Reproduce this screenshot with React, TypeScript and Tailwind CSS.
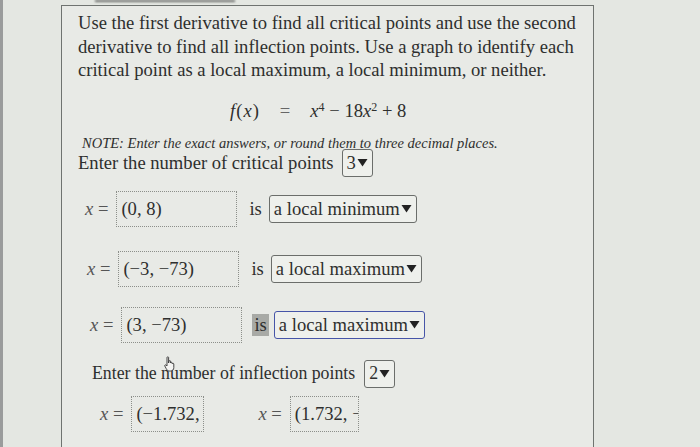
import type { ReactNode } from 'react';

const serif = { fontFamily: '"Liberation Serif", "Times New Roman", serif' };

const Caret = () => (
	<svg width="11" height="9" viewBox="0 0 11 9" className="ml-[1px] shrink-0">
		<path d="M0.5 1 L10.5 1 L5.5 8.5 Z" fill="#222" />
	</svg>
);

type SelectProps = {
	value: string;
	focused?: boolean;
	className?: string;
};

const Select = (props: SelectProps) => (
	<div
		className={`flex h-[28px] items-center rounded-[3px] border bg-[#eef0ec] px-[4px] ${
			props.focused ? 'border-[#4655a8]' : 'border-[#6b6e6b]'
		} ${props.className ?? ''}`}
	>
		<span>{props.value}</span>
		<Caret />
	</div>
);

type AnswerProps = {
	value: ReactNode;
	className?: string;
};

const Answer = (props: AnswerProps) => (
	<div
		className={`flex h-[36px] items-center overflow-hidden whitespace-nowrap border border-dotted border-[#8c8f8a] pl-[4px] ${
			props.className ?? ''
		}`}
	>
		{props.value}
	</div>
);

const XEq = () => (
	<span className="whitespace-nowrap text-[#555]">
		<i>x</i> =
	</span>
);

type RowProps = {
	pad: string;
	value: string;
	type: string;
	focused?: boolean;
	className?: string;
};

const PointRow = (props: RowProps) => (
	<div className={`flex items-center ${props.pad} ${props.className ?? ''}`}>
		<XEq />
		<Answer value={props.value} className="ml-[8px] w-[121px]" />
		<span
			className={`ml-[10px] px-[2px] leading-[22px] ${
				props.focused ? 'bg-[#a8aaa6]' : ''
			}`}
		>
			is
		</span>
		<Select value={props.type} focused={props.focused} className="ml-[5px]" />
	</div>
);

const HandCursor = () => (
	<svg
		width="12"
		height="16"
		viewBox="0 0 12 16"
		className="absolute left-[164px] top-[356px]"
	>
		<path
			d="M3 1.5 C3 0.6 4.6 0.6 4.6 1.5 L4.6 7 L5 5.2 C5 4.4 6.5 4.4 6.5 5.2 L6.6 7 C6.7 6 8.1 6 8.1 7 L8.2 7.8 C8.4 7 9.8 7.1 9.8 8 L9.8 11.5 C9.8 13.5 8.6 15 6.5 15 L5.2 15 C3.8 15 3 14 2.2 12.6 L0.8 10 C0.4 9.2 1.4 8.4 2.1 9.1 L3 10 Z"
			fill="#f4f4f2"
			stroke="#333"
			strokeWidth="0.9"
		/>
	</svg>
);

export default function App() {
	return (
		<div
			className="relative h-[447px] w-[700px] overflow-hidden bg-[#e4e7e2] text-[18.6px] text-[#2e2f2e]"
			style={serif}
		>
			<div className="absolute left-0 top-0 h-full w-[3px] bg-[#9a9c9c]" />
			<div className="absolute left-[95px] top-0 h-[2px] w-[140px] bg-[#6a6c6a] blur-[1px]" />

			<div className="ml-[61px] mt-[5px] h-[460px] w-[533px] border-x border-t border-[#6f7370] bg-[#e8eae6]">
				<div className="pl-[16px] pt-[5px] leading-[23.5px]">
					<div>Use the first derivative to find all critical points and use the second</div>
					<div>derivative to find all inflection points. Use a graph to identify each</div>
					<div>critical point as a local maximum, a local minimum, or neither.</div>
				</div>

				<div className="mt-[17px] flex h-[24px] items-center pl-[168px]">
					<span className="tracking-[1px]">
						<i>f</i>(<i>x</i>)
					</span>
					<span className="ml-[20px] text-[#666]">=</span>
					<span className="ml-[20px]">
						<i>x</i>
						<sup className="text-[12px]">4</sup> − 18<i>x</i>
						<sup className="text-[12px]">2</sup> + 8
					</span>
				</div>

				<div className="mt-[12px] pl-[20px] text-[14.5px] italic leading-[16px]">
					NOTE: Enter the exact answers, or round them to three decimal places.
				</div>

				<div className="-mt-[2px] flex items-center pl-[16px]">
					<span>Enter the number of critical points</span>
					<Select value="3" className="ml-[8px]" />
				</div>

				<PointRow pad="pl-[23px]" value="(0, 8)" type="a local minimum" className="mt-[14px]" />
				<PointRow pad="pl-[25px]" value="(−3, −73)" type="a local maximum" className="mt-[24px]" />
				<PointRow
					pad="pl-[28px]"
					value="(3, −73)"
					type="a local maximum"
					focused
					className="mt-[20px]"
				/>

				<div className="mt-[17px] flex items-center pl-[30px] text-[17.8px]">
					<span>Enter the number of inflection points</span>
					<Select value="2" className="ml-[9px] h-[25px] px-[3px]" />
				</div>

				<div className="mt-[8px] flex items-center pl-[38px]">
					<XEq />
					<Answer value="(−1.732," className="ml-[8px] h-[30px] w-[73px]" />
					<span className="ml-[54px]">
						<XEq />
					</span>
					<Answer value="(1.732, −73)" className="ml-[8px] h-[30px] w-[69px]" />
				</div>
			</div>

			<HandCursor />
		</div>
	);
}
